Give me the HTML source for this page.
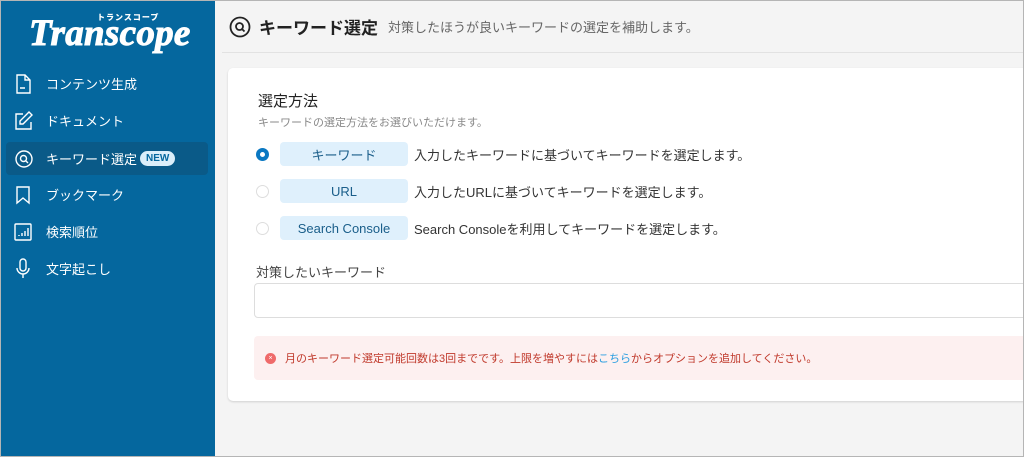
<!DOCTYPE html><html><head><meta charset="utf-8"><style>
*{margin:0;padding:0;box-sizing:border-box}
body{width:1024px;height:457px;overflow:hidden;font-family:"Liberation Sans","Noto Sans CJK JP",sans-serif;background:#f4f4f4;position:relative}
.frame{position:absolute;inset:0;border:1px solid #b5b5b5;pointer-events:none;z-index:9}
.side{position:absolute;left:0;top:0;width:215px;height:457px;background:#05679e;color:#fff}
.logo{position:absolute;left:29px;top:12px;font-family:"Liberation Serif",serif;font-weight:900;font-style:italic;font-size:37px;letter-spacing:0.3px;color:#fff;-webkit-text-stroke:1px #fff}
.logo small{position:absolute;left:68px;top:0px;font-size:8px;font-style:normal;font-family:"Noto Sans CJK JP",sans-serif;letter-spacing:1px;-webkit-text-stroke:0}
.item{position:absolute;left:6px;width:202px;height:33px;display:flex;align-items:center;font-size:13px}
.item svg{position:absolute;left:8px}
.item span.t{position:absolute;left:40px}
.act{background:#0a5a88;border-radius:4px}
.new{position:absolute;left:133px;background:#dbeefa;color:#05679e;font-size:10px;font-weight:bold;border-radius:9px;padding:2px 6px}
.main{position:absolute;left:215px;top:0;right:0;bottom:0}
.hdr{position:absolute;left:14px;top:14px;display:flex;align-items:center}
.hdr b{font-size:17px;color:#222;margin-left:8px}
.hdr span{font-size:13px;color:#666;margin-left:10px}
.hr{position:absolute;left:7px;right:0;top:52px;height:1px;background:#e2e2e2}
.card{position:absolute;left:13px;top:68px;right:-10px;height:333px;background:#fff;border-radius:5px;box-shadow:0 1px 2px rgba(0,0,0,.15)}
.h{position:absolute;left:30px;top:22px;font-size:15px;color:#222}
.sub{position:absolute;left:30px;top:46px;font-size:11px;color:#888}
.row{position:absolute;left:28px;display:flex;align-items:center;font-size:13px;color:#333}
.rad{width:13px;height:13px;border-radius:50%;border:1px solid #ddd;margin-right:11px}
.rad.on{border:4px solid #0a78c2}
.pill{width:128px;height:24px;background:#dff0fc;color:#1a5e8a;border-radius:4px;display:flex;align-items:center;justify-content:center;margin-right:6px}
.lbl{position:absolute;left:28px;top:194px;font-size:13px;color:#444}
.inp{position:absolute;left:26px;top:215px;right:0;height:35px;border:1px solid #ddd;border-radius:4px}
.err{position:absolute;left:26px;top:268px;right:0;height:44px;background:#fdf0f0;border-radius:4px;display:flex;align-items:center;font-size:11px;color:#c0392b}
.err i{width:11px;height:11px;background:#ef6a6a;border-radius:50%;margin:0 9px 0 11px;display:inline-flex;align-items:center;justify-content:center;color:#fff;font-size:7px;font-style:normal}
.err a{color:#2a9ee0}
</style></head><body>
<div class="side">
<div class="logo">Transcope<small>トランスコープ</small></div>
<div class="item" style="top:67px"><svg width="18" height="20" viewBox="0 0 18 20" fill="none" stroke="#fff" stroke-width="1.4"><path d="M3 1h8l5 5v13H3z"/><path d="M11 1v5h5M6 14h5"/></svg><span class="t">コンテンツ生成</span></div>
<div class="item" style="top:104px"><svg width="20" height="20" viewBox="0 0 20 20" fill="none" stroke="#fff" stroke-width="1.4"><path d="M9 3H2v15h15v-7"/><path d="M15 1l3 3-9 9H6v-3z"/></svg><span class="t">ドキュメント</span></div>
<div class="item act" style="top:142px"><svg width="20" height="20" viewBox="0 0 20 20" fill="none" stroke="#fff" stroke-width="1.4"><circle cx="10" cy="10" r="8"/><circle cx="9.5" cy="9.5" r="3"/><path d="M12 12l2 2"/></svg><span class="t">キーワード選定</span><span class="new" style="left:134px">NEW</span></div>
<div class="item" style="top:178px"><svg width="18" height="20" viewBox="0 0 18 20" fill="none" stroke="#fff" stroke-width="1.4"><path d="M3 2h12v16l-6-5-6 5z"/></svg><span class="t">ブックマーク</span></div>
<div class="item" style="top:215px"><svg width="18" height="18" viewBox="0 0 18 18" fill="none" stroke="#fff" stroke-width="1.4"><rect x="1" y="1" width="16" height="16" rx="1"/><path d="M5 13v-1M8 13v-3M11 13v-5M14 13V5"/></svg><span class="t">検索順位</span></div>
<div class="item" style="top:252px"><svg width="18" height="22" viewBox="0 0 18 22" fill="none" stroke="#fff" stroke-width="1.4"><rect x="6" y="1" width="6" height="12" rx="3"/><path d="M3 10a6 6 0 0012 0M9 16v4"/></svg><span class="t">文字起こし</span></div>
</div>
<div class="main">
<div class="hdr"><svg width="22" height="22" viewBox="0 0 22 22" fill="none" stroke="#222" stroke-width="1.8"><circle cx="11" cy="11" r="9.5"/><circle cx="10.5" cy="10.5" r="3.5"/><path d="M13 13l2.5 2.5"/></svg><b>キーワード選定</b><span>対策したほうが良いキーワードの選定を補助します。</span></div>
<div class="hr"></div>
<div class="card">
<div class="h">選定方法</div>
<div class="sub">キーワードの選定方法をお選びいただけます。</div>
<div class="row" style="top:74px"><div class="rad on"></div><div class="pill">キーワード</div>入力したキーワードに基づいてキーワードを選定します。</div>
<div class="row" style="top:111px"><div class="rad"></div><div class="pill">URL</div>入力したURLに基づいてキーワードを選定します。</div>
<div class="row" style="top:148px"><div class="rad"></div><div class="pill">Search Console</div>Search Consoleを利用してキーワードを選定します。</div>
<div class="lbl">対策したいキーワード</div>
<div class="inp"></div>
<div class="err"><i>×</i>月のキーワード選定可能回数は3回までです。上限を増やすには<a>こちら</a>からオプションを追加してください。</div>
</div>
</div>
<div class="frame"></div>
</body></html>
